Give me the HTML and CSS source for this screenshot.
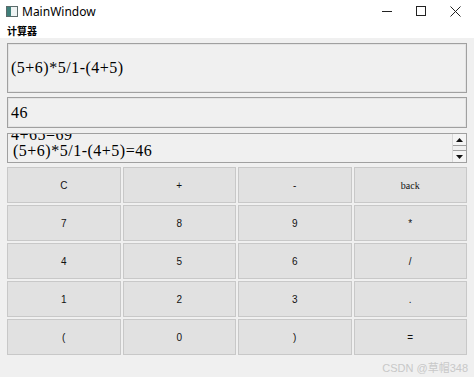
FILE: index.html
```html
<!DOCTYPE html>
<html lang="zh-CN">
<head>
    <meta charset="UTF-8">
    <title>MainWindow</title>
    <link rel="stylesheet" href="styles.css">
</head>
<body>
    <div class="window">
        <div class="titlebar">
            <svg class="app-icon" width="12" height="11" viewBox="0 0 12 11">
                <rect x="0.5" y="0.5" width="11" height="10" fill="#eef3f3" stroke="#5c6b6b"/>
                <rect x="1" y="1" width="4" height="9" fill="#3f7f7a"/>
            </svg>
            <span class="title">MainWindow</span>
            <div class="controls">
                <svg width="36" height="22" viewBox="0 0 36 22"><line x1="13" y1="11.5" x2="23" y2="11.5" stroke="#222" stroke-width="1"/></svg>
                <svg width="32" height="22" viewBox="0 0 32 22"><rect x="11.5" y="6.5" width="9" height="9" fill="none" stroke="#222"/></svg>
                <svg width="37" height="22" viewBox="0 0 37 22"><path d="M13.5 6.5 L23.5 16.5 M23.5 6.5 L13.5 16.5" stroke="#222" stroke-width="1"/></svg>
            </div>
        </div>
        <div class="menubar">计算器</div>

        <div class="central">
            <div class="display expr">(5+6)*5/1-(4+5)</div>
            <div class="display result">46</div>
            <div class="history">
                <div class="history-text">
                    <div class="line cut">4+65=69</div>
                    <div class="line">(5+6)*5/1-(4+5)=46</div>
                </div>
                <div class="scrollbar">
                    <div class="arrow">
                        <svg width="7" height="4" viewBox="0 0 7 4"><path d="M0 4 L3.5 0 L7 4 Z" fill="#111"/></svg>
                    </div>
                    <div class="track"></div>
                    <div class="arrow">
                        <svg width="7" height="4" viewBox="0 0 7 4"><path d="M0 0 L3.5 4 L7 0 Z" fill="#111"/></svg>
                    </div>
                </div>
            </div>

            <div class="keys">
                <button>C</button>
                <button>+</button>
                <button>-</button>
                <button class="word">back</button>
                <button>7</button>
                <button>8</button>
                <button>9</button>
                <button>*</button>
                <button>4</button>
                <button>5</button>
                <button>6</button>
                <button>/</button>
                <button>1</button>
                <button>2</button>
                <button>3</button>
                <button>.</button>
                <button>(</button>
                <button>0</button>
                <button>)</button>
                <button>=</button>
            </div>
        </div>
        <div class="watermark">CSDN @草帽348</div>
    </div>
</body>
</html>
```

FILE: styles.css
```css
body {
    margin: 0;
    background: #f0f0f0;
    font-family: "Liberation Sans", "Noto Sans CJK SC", sans-serif;
}
.window {
    width: 474px;
    height: 377px;
    background: #f0f0f0;
    position: relative;
    overflow: hidden;
}
.titlebar {
    height: 22px;
    background: #fff;
    display: flex;
    align-items: center;
    padding-left: 6px;
}
.app-icon {
    margin-right: 4px;
}
.title {
    font-family: "Noto Sans", sans-serif;
    font-size: 12px;
    color: #000;
}
.controls {
    margin-left: auto;
    display: flex;
    align-items: center;
}
.controls svg {
    display: block;
}
.menubar {
    height: 16px;
    background: #fff;
    padding-left: 7px;
    font-family: "Noto Sans CJK SC", sans-serif;
    font-size: 10px;
    font-weight: bold;
    line-height: 17px;
}
.central {
    padding: 5px 7px 0 7px;
    display: flex;
    flex-direction: column;
    gap: 4px;
}
.display {
    border: 1px solid #a0a0a0;
    box-shadow: inset 0 0 0 1px #e4e4e4;
    background: #f0f0f0;
    display: flex;
    align-items: center;
    padding-left: 3px;
    font-family: "Liberation Serif", "Noto Sans CJK SC", serif;
    font-size: 16px;
    letter-spacing: 0.5px;
    color: #000;
}
.expr {
    height: 48px;
}
.result {
    height: 29px;
}
.history {
    height: 28px;
    border: 1px solid #a0a0a0;
    display: flex;
    overflow: hidden;
    margin-top: 1px;
}
.history-text {
    flex: 1;
    padding-left: 3px;
    font-family: "Liberation Serif", "Noto Sans CJK SC", serif;
    font-size: 16px;
    letter-spacing: 0.5px;
    line-height: 16px;
    overflow: hidden;
}
.line {
    padding-left: 2px;
}
.line.cut {
    margin-top: -7px;
    padding-left: 0;
}
.scrollbar {
    width: 13px;
    display: flex;
    flex-direction: column;
    border-left: 1px solid #d8d8d8;
    background: #f0f0f0;
}
.arrow {
    height: 11px;
    display: flex;
    align-items: center;
    justify-content: center;
    border-bottom: 1px solid #a0a0a0;
    background: #f4f4f4;
}
.arrow:last-child {
    border-bottom: none;
    border-top: 1px solid #a0a0a0;
}
.track {
    flex: 1;
}
.keys {
    display: grid;
    grid-template-columns: repeat(4, 1fr);
    grid-auto-rows: 36px;
    gap: 2px;
}
.keys button {
    background: #e1e1e1;
    border: 1px solid #c8c8c8;
    font-family: "Liberation Sans", sans-serif;
    font-size: 10px;
    color: #111;
    padding: 0;
}
.keys button.word {
    font-family: "Liberation Serif", serif;
}
.watermark {
    position: absolute;
    right: 6px;
    bottom: 2px;
    font-size: 11px;
    color: #c8c8c8;
    font-family: "Liberation Sans", "Noto Sans CJK SC", sans-serif;
}
```
